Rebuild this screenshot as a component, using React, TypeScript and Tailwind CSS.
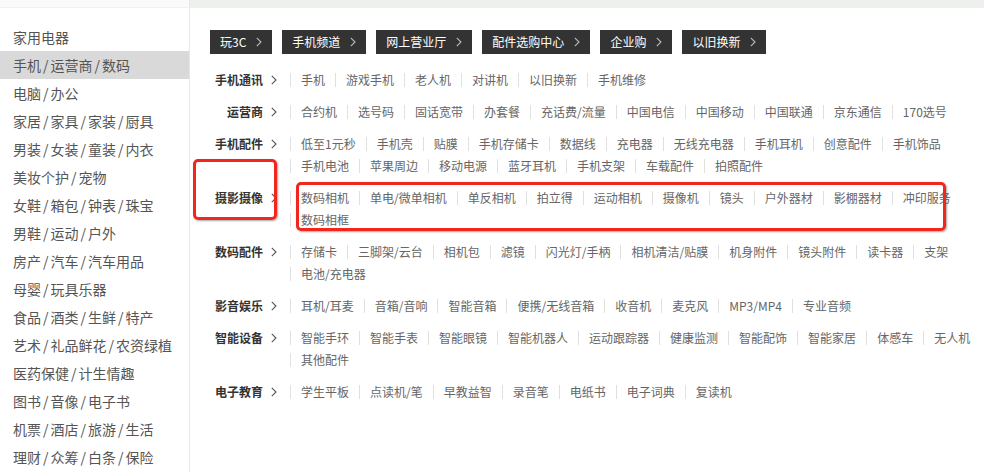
const sideItems = [
  "家用电器",
  "手机/运营商/数码",
  "电脑/办公",
  "家居/家具/家装/厨具",
  "男装/女装/童装/内衣",
  "美妆个护/宠物",
  "女鞋/箱包/钟表/珠宝",
  "男鞋/运动/户外",
  "房产/汽车/汽车用品",
  "母婴/玩具乐器",
  "食品/酒类/生鲜/特产",
  "艺术/礼品鲜花/农资绿植",
  "医药保健/计生情趣",
  "图书/音像/电子书",
  "机票/酒店/旅游/生活",
  "理财/众筹/白条/保险",
];

const channels = ["玩3C", "手机频道", "网上营业厅", "配件选购中心", "企业购", "以旧换新"];

const groups: { title: string; items: string[] }[] = [
  { title: "手机通讯", items: ["手机", "游戏手机", "老人机", "对讲机", "以旧换新", "手机维修"] },
  {
    title: "运营商",
    items: ["合约机", "选号码", "固话宽带", "办套餐", "充话费/流量", "中国电信", "中国移动", "中国联通", "京东通信", "170选号"],
  },
  {
    title: "手机配件",
    items: [
      "低至1元秒", "手机壳", "贴膜", "手机存储卡", "数据线", "充电器", "无线充电器", "手机耳机", "创意配件",
      "手机饰品", "手机电池", "苹果周边", "移动电源", "蓝牙耳机", "手机支架", "车载配件", "拍照配件",
    ],
  },
  {
    title: "摄影摄像",
    items: ["数码相机", "单电/微单相机", "单反相机", "拍立得", "运动相机", "摄像机", "镜头", "户外器材", "影棚器材", "冲印服务", "数码相框"],
  },
  {
    title: "数码配件",
    items: ["存储卡", "三脚架/云台", "相机包", "滤镜", "闪光灯/手柄", "相机清洁/贴膜", "机身附件", "镜头附件", "读卡器", "支架", "电池/充电器"],
  },
  {
    title: "影音娱乐",
    items: ["耳机/耳麦", "音箱/音响", "智能音箱", "便携/无线音箱", "收音机", "麦克风", "MP3/MP4", "专业音频"],
  },
  {
    title: "智能设备",
    items: ["智能手环", "智能手表", "智能眼镜", "智能机器人", "运动跟踪器", "健康监测", "智能配饰", "智能家居", "体感车", "无人机", "其他配件"],
  },
  { title: "电子教育", items: ["学生平板", "点读机/笔", "早教益智", "录音笔", "电纸书", "电子词典", "复读机"] },
];

function Chevron({ className }: { className: string }) {
  return (
    <svg width="6" height="10" viewBox="0 0 6 10" className={className}>
      <polyline points="0.8,0.8 5,5 0.8,9.2" fill="none" stroke="currentColor" strokeWidth="1.1" />
    </svg>
  );
}

function SideLabel({ text }: { text: string }) {
  const parts = text.split("/");
  return (
    <>
      {parts.map((p, i) => (
        <span key={i}>
          {i > 0 && <span className="mx-[2px]">/</span>}
          {p}
        </span>
      ))}
    </>
  );
}

export default function App() {
  return (
    <div
      className="relative flex w-[984px] h-[472px] overflow-hidden bg-white"
      style={{ fontFamily: '"Noto Sans CJK SC", "Noto Sans", sans-serif' }}
    >
      {/* left category menu */}
      <div className="w-[189px] shrink-0 flex flex-col">
        <div className="h-[8px] border-b border-[#f2f2f2] bg-[#fafafa]" />
        <ul className="pt-[15px]">
          {sideItems.map((s, i) => (
            <li
              key={s}
              className={`h-[28px] pl-[13px] flex items-center text-[14px] text-[#555] ${i === 1 ? "bg-[#d9d9d9]" : ""}`}
            >
              <SideLabel text={s} />
            </li>
          ))}
        </ul>
      </div>

      {/* right popup panel */}
      <div className="flex-1 flex flex-col border-l border-[#e6e6e6]">
        <div className="h-[8px] bg-[#eef0ee] shrink-0" />
        <div className="pl-[20px] pt-[22px]">
          <div className="flex gap-[10px]">
            {channels.map(c => (
              <div key={c} className="h-[24px] px-[10px] flex items-center gap-[10px] bg-[#333] text-white text-[12px]">
                <span>{c}</span>
                <Chevron className="text-[#bbb]" />
              </div>
            ))}
          </div>

          <dl className="mt-[10px]">
            {groups.map(g => (
              <div key={g.title} className="flex py-[9px]">
                <dt className="w-[80px] shrink-0 h-[14px] flex items-center justify-end pr-[13px] text-[12px] font-bold text-[#333]">
                  <span className="leading-[14px]">{g.title}</span>
                  <Chevron className="ml-[8px] text-[#555]" />
                </dt>
                <dd className="w-[700px] flex flex-wrap gap-y-[8px]">
                  {g.items.map(it => (
                    <span key={it} className="h-[14px] leading-[14px] px-[10px] border-l border-[#e0e0e0] text-[12px] text-[#666] whitespace-nowrap">
                      {it}
                    </span>
                  ))}
                </dd>
              </div>
            ))}
          </dl>
        </div>
      </div>

      {/* annotation boxes */}
      <div className="absolute left-[193px] top-[159px] w-[84px] h-[61px] border-[3px] border-[#f2261c] rounded-[5px] shadow-[1px_1px_2px_rgba(0,0,0,0.35)]" />
      <div className="absolute left-[296px] top-[182px] w-[650px] h-[49px] border-[3px] border-[#f2261c] rounded-[5px] shadow-[1px_1px_2px_rgba(0,0,0,0.35)]" />
    </div>
  );
}
